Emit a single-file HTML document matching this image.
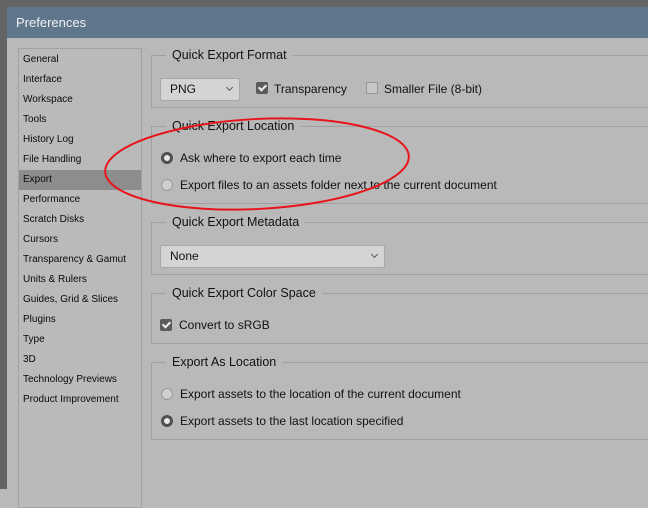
<!DOCTYPE html>
<html style="background:#b9b9b9"><head><style>
*{margin:0;padding:0;box-sizing:border-box}
body{width:648px;height:489px;overflow:hidden;background:#646464;font-family:"Liberation Sans",sans-serif;color:#111;position:relative}
.win{position:absolute;left:7px;top:7px;right:0;bottom:0;background:#b9b9b9}
.title{position:absolute;left:7px;top:7px;right:0;height:31px;background:#5f768b;color:#eef2f6;font-size:13px;line-height:31px;padding-left:9px}
.side{position:absolute;left:18px;top:48px;width:124px;height:460px;border:1px solid #a2a2a2;background:#bababa;padding-top:1px}
.side div{height:20px;line-height:20px;padding-left:4px;font-size:10px;color:#0a0a0a}
.side .sel{background:#8d8d8d}
.vline{position:absolute;left:141px;top:48px;width:1px;bottom:0;background:#a2a2a2}
.grp{position:absolute;left:151px;width:520px;border:1px solid #a0a0a0}
.grp .t{position:absolute;top:-9px;left:14px;background:#b9b9b9;padding:0 6px;font-size:12.5px;line-height:16px;color:#111}
.abs{position:absolute;font-size:12px;line-height:14px;white-space:nowrap}
.dd{position:absolute;background:#d4d4d4;border:1px solid #a8a8a8;border-radius:2px;font-size:12px;line-height:20px;padding-left:9px}
.dd:after{content:"";position:absolute;right:7px;top:6px;width:4px;height:4px;border-right:1px solid #555;border-bottom:1px solid #555;transform:rotate(45deg)}
.cb{position:absolute;width:12px;height:12px;border-radius:2px}
.cb.on{background:#5a5a5a}
.cb.on:after{content:"";position:absolute;left:4px;top:1px;width:3px;height:6px;border-right:2px solid #eee;border-bottom:2px solid #eee;transform:rotate(45deg)}
.cb.off{background:#c8c8c8;border:1px solid #999}
.rb{position:absolute;width:12px;height:12px;border-radius:50%}
.rb.on{background:#e8e8e8;border:3px solid #505050}
.rb.off{background:#cfcfcf;border:1px solid #999}
</style></head><body>
<div class="win"></div>
<div class="title">Preferences</div>
<div class="side">
<div>General</div><div>Interface</div><div>Workspace</div><div>Tools</div><div>History Log</div><div>File Handling</div><div class="sel">Export</div><div>Performance</div><div>Scratch Disks</div><div>Cursors</div><div>Transparency &amp; Gamut</div><div>Units &amp; Rulers</div><div>Guides, Grid &amp; Slices</div><div>Plugins</div><div>Type</div><div>3D</div><div>Technology Previews</div><div>Product Improvement</div>
</div>
<div class="vline"></div>

<div class="grp" style="top:55px;height:53px"><span class="t">Quick Export Format</span></div>
<div class="dd" style="left:160px;top:78px;width:80px;height:23px">PNG</div>
<div class="cb on" style="left:256px;top:82px"></div>
<div class="abs" style="left:274px;top:82px">Transparency</div>
<div class="cb off" style="left:366px;top:82px"></div>
<div class="abs" style="left:384px;top:82px">Smaller File (8-bit)</div>

<div class="grp" style="top:126px;height:78px"><span class="t">Quick Export Location</span></div>
<div class="rb on" style="left:161px;top:152px"></div>
<div class="abs" style="left:180px;top:151px">Ask where to export each time</div>
<div class="rb off" style="left:161px;top:179px"></div>
<div class="abs" style="left:180px;top:178px">Export files to an assets folder next to the current document</div>

<div class="grp" style="top:222px;height:53px"><span class="t">Quick Export Metadata</span></div>
<div class="dd" style="left:160px;top:245px;width:225px;height:23px">None</div>

<div class="grp" style="top:293px;height:51px"><span class="t">Quick Export Color Space</span></div>
<div class="cb on" style="left:160px;top:319px"></div>
<div class="abs" style="left:179px;top:318px">Convert to sRGB</div>

<div class="grp" style="top:362px;height:78px"><span class="t">Export As Location</span></div>
<div class="rb off" style="left:161px;top:388px"></div>
<div class="abs" style="left:180px;top:387px">Export assets to the location of the current document</div>
<div class="rb on" style="left:161px;top:415px"></div>
<div class="abs" style="left:180px;top:414px">Export assets to the last location specified</div>

<svg style="position:absolute;left:0;top:0" width="648" height="489"><ellipse cx="257" cy="164" rx="152" ry="45" fill="none" stroke="#e8141b" stroke-width="2" transform="rotate(-3 257 164)"/></svg>
</body></html>
